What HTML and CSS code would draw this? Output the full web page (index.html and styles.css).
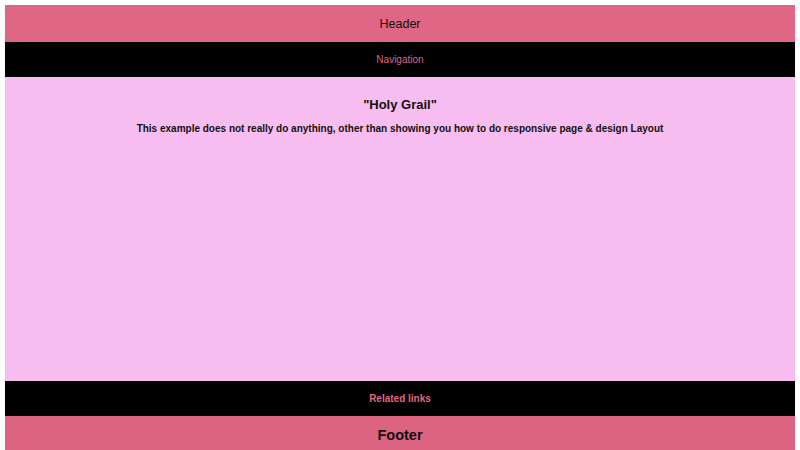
FILE: index.html
```html
<!DOCTYPE html>
<html>
<head>
<meta charset="utf-8">
<link rel="stylesheet" href="styles.css">
</head>
<body>
<div class="page">
  <header class="header">Header</header>
  <nav class="nav">Navigation</nav>
  <main class="main">
    <h2 class="title">"Holy Grail"</h2>
    <p class="lead">This example does not really do anything, other than showing you how to do responsive page &amp; design Layout</p>
  </main>
  <aside class="related">Related links</aside>
  <footer class="footer">Footer</footer>
</div>
</body>
</html>
```
FILE: styles.css
```css
html, body { margin: 0; padding: 0; }
body { margin: 5px; font-family: "Liberation Sans", Arial, sans-serif; background: #fff; }
.page { display: flex; flex-direction: column; }
.header { height: 37px; display: flex; align-items: center; justify-content: center; background: #df6684; color: #111; font-size: 12.5px; }
.nav { height: 35px; display: flex; align-items: center; justify-content: center; background: #000; color: #df6684; font-size: 10px; }
.main { height: 304px; background: #f7bdf0; display: flex; flex-direction: column; align-items: center; padding-top: 20px; box-sizing: border-box; }
.title { margin: 0; font-size: 13px; font-weight: bold; color: #111; line-height: 15px; }
.lead { margin: 11px 0 0; font-size: 10px; font-weight: bold; color: #111; line-height: 12px; }
.related { height: 35px; display: flex; align-items: center; justify-content: center; background: #000; color: #df6684; font-size: 10px; font-weight: bold; }
.footer { height: 40px; padding-bottom: 2px; box-sizing: border-box; display: flex; align-items: center; justify-content: center; background: #dd6383; color: #111; font-size: 14.5px; font-weight: bold; }
```
